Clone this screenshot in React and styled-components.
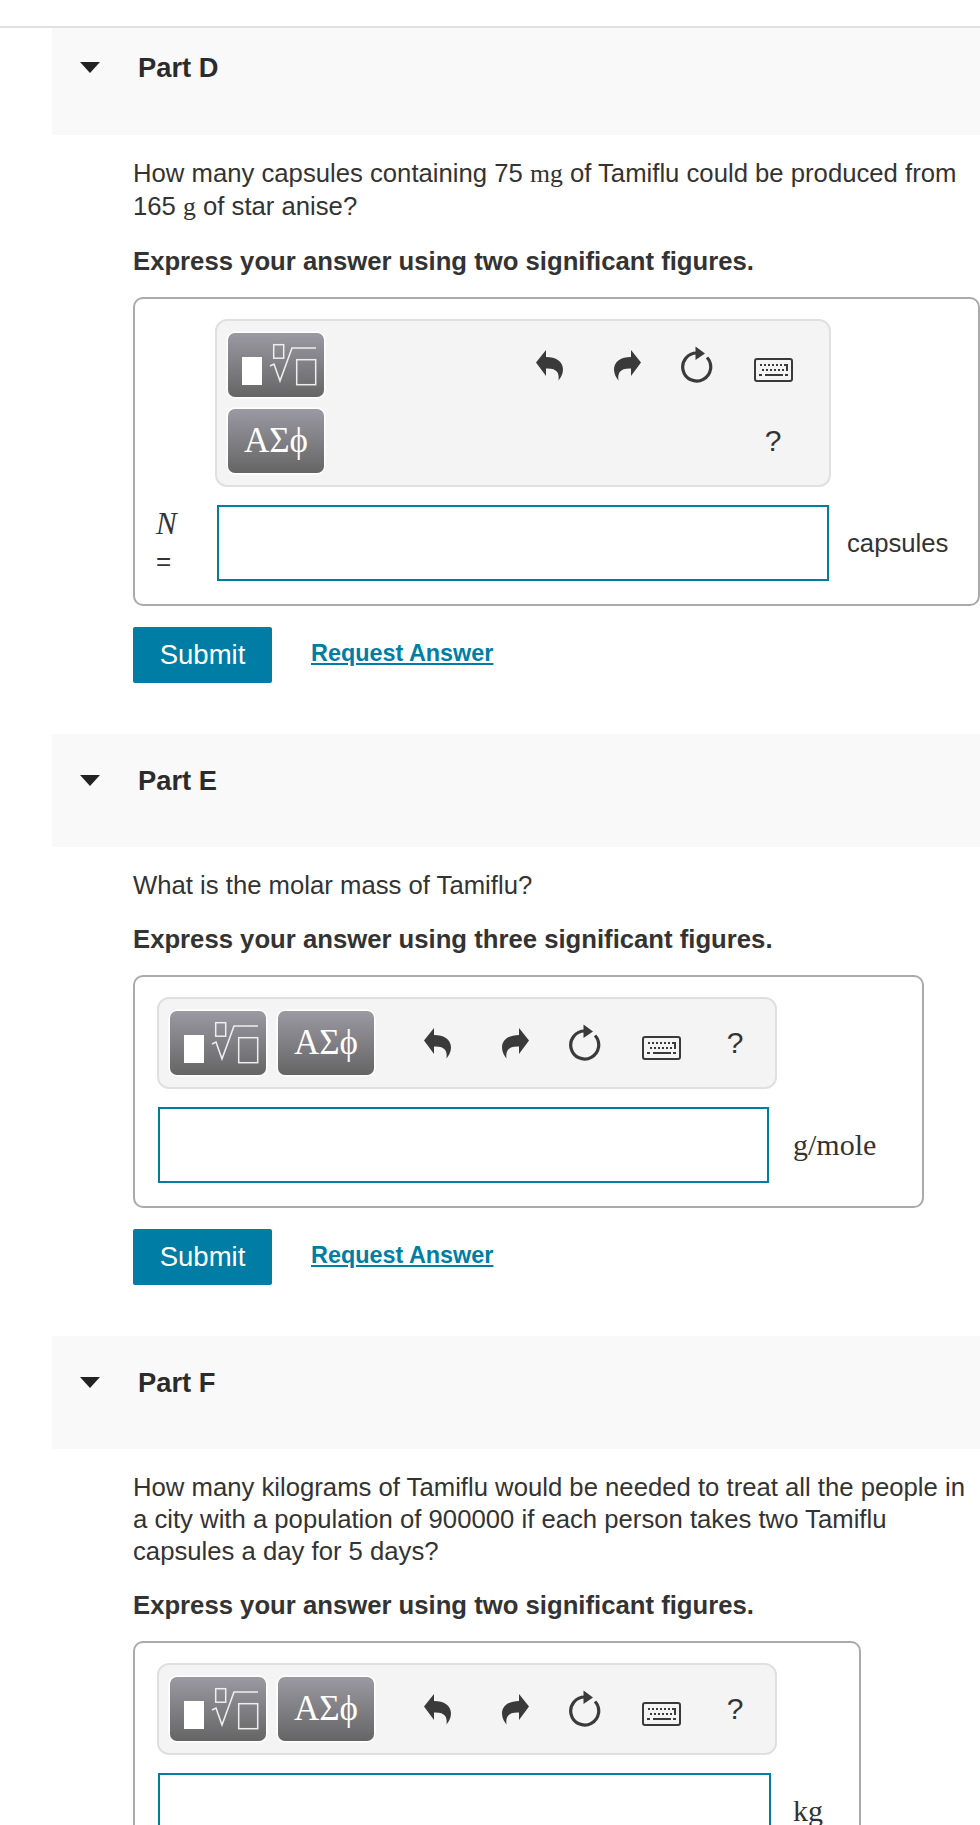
import React from "react";
import styled, { createGlobalStyle } from "styled-components";

const GlobalStyle = createGlobalStyle`
  html, body {
    margin: 0;
    padding: 0;
    background: #fff;
  }
  body {
    font-family: "Liberation Sans", Arial, sans-serif;
    color: #333;
  }
`;

const Page = styled.div`
  width: 980px;
  height: 1825px;
  overflow: hidden;
  padding-top: 26px;
  box-sizing: border-box;
`;

const Rule = styled.div`
  height: 2px;
  background: #e0e0e0;
`;

const Part = styled.section`
  margin-left: 52px;
  margin-bottom: 51px;
`;

const PartHeader = styled.div`
  display: flex;
  align-items: center;
  gap: 38px;
  box-sizing: border-box;
  height: ${(p) => (p.$first ? "107px" : "113px")};
  padding: ${(p) => (p.$first ? "24px" : "31px")} 0 0 28px;
  align-items: flex-start;
  background: #f9f9f9;
`;

const Caret = styled.span`
  width: 0;
  height: 0;
  margin-top: 10px;
  border-left: 10px solid transparent;
  border-right: 10px solid transparent;
  border-top: 11px solid #222;
`;

const PartTitle = styled.h2`
  margin: 0;
  font-size: 27.3px;
  line-height: 32px;
  font-weight: 700;
  color: #2b2b2b;
`;

const PartBody = styled.div`
  padding: 22px 0 0 81px;
`;

const Question = styled.p`
  margin: 0 0 22px;
  font-size: 25.7px;
  line-height: 32px;
  color: #333;
`;

const Instruction = styled.p`
  margin: 0 0 20px;
  font-size: 25.7px;
  line-height: 32px;
  font-weight: 700;
  color: #333;
`;

const Serif = styled.span`
  font-family: "Liberation Serif", "Times New Roman", serif;
`;

const AnswerBox = styled.div`
  display: grid;
  grid-template-columns: ${(p) => p.$left}px ${(p) => p.$main}px 1fr;
  row-gap: 18px;
  box-sizing: border-box;
  width: ${(p) => p.$width}px;
  padding: 20px 0 23px;
  border: 2px solid #aaa;
  border-radius: 10px;
`;

const Toolbar = styled.div`
  grid-column: 2;
  display: flex;
  box-sizing: border-box;
  padding: 12px 11px;
  background: #f4f4f4;
  border: 2px solid #e0e0e0;
  border-radius: 12px;
`;

const Palette = styled.div`
  display: flex;
  flex-direction: ${(p) => (p.$stacked ? "column" : "row")};
  gap: 12px;
`;

const PaletteButton = styled.div`
  display: flex;
  align-items: center;
  justify-content: center;
  width: 96px;
  height: 64px;
  border-radius: 7px;
  background: linear-gradient(#9b99a2, #656565);
  box-shadow: 0 0 0 1.5px #fff;
  color: #fff;
  font-family: "Liberation Serif", "Times New Roman", serif;
  font-size: 35px;
`;

const Tools = styled.div`
  margin-left: auto;
  display: grid;
  grid-template-columns: 78px 78px 62px 90px ${(p) => (p.$wrapped ? "" : "58px")};
  grid-auto-rows: 64px;
  row-gap: 12px;
  align-items: center;
  justify-items: center;
  color: #333;
`;

const KeyboardCell = styled.div`
  margin-top: 10px;
  display: flex;
`;

const Help = styled.div`
  grid-column: ${(p) => (p.$wrapped ? 4 : "auto")};
  font-size: 30px;
  line-height: 34px;
  color: #333;
`;

const SymbolLabel = styled.div`
  grid-column: 1;
  display: flex;
  flex-direction: column;
  padding: 0 0 0 21px;
`;

const Variable = styled.span`
  font-family: "Liberation Serif", "Times New Roman", serif;
  font-style: italic;
  font-size: 31px;
  line-height: 38px;
`;

const Equals = styled.span`
  font-size: 26px;
  line-height: 36px;
`;

const AnswerInput = styled.div`
  grid-column: 2;
  box-sizing: border-box;
  width: ${(p) => p.$width}px;
  height: 76px;
  margin-left: ${(p) => p.$offset}px;
  border: 2px solid #007da4;
  background: #fff;
`;

const Unit = styled.div`
  display: flex;
  align-items: center;
  padding-left: 16px;
  height: 76px;
  font-size: 25.7px;
  color: #333;
`;

const SerifUnit = styled(Unit)`
  font-family: "Liberation Serif", "Times New Roman", serif;
  font-size: 30px;
`;

const Actions = styled.div`
  display: flex;
  align-items: center;
  gap: 39px;
  margin-top: 21px;
`;

const SubmitButton = styled.button`
  width: 139px;
  height: 56px;
  padding: 0;
  border: 0;
  border-radius: 2px;
  background: #007da4;
  color: #fff;
  font-family: inherit;
  font-size: 27.5px;
`;

const RequestLink = styled.a`
  margin-top: -4px;
  color: #007da4;
  font-size: 23.4px;
  font-weight: 700;
  text-decoration: underline;
`;

function TemplatesIcon() {
  return (
    <svg width="96" height="64" viewBox="0 0 96 64" fill="none">
      <rect x="14" y="24" width="20" height="28" fill="#fff" />
      <rect x="45.7" y="11.7" width="10" height="13.5" stroke="#eee" strokeWidth="1.5" />
      <path d="M42 33l4-2 6 17 12-33h24" stroke="#eee" strokeWidth="1.6" />
      <rect x="68.7" y="26.7" width="19" height="25" stroke="#eee" strokeWidth="1.5" />
    </svg>
  );
}

function ReplyIcon({ flip }) {
  return (
    <svg
      width="27"
      height="32"
      viewBox="0 0 27 32"
      fill="#3a3a3a"
      style={flip ? { transform: "scaleX(-1)" } : undefined}
    >
      <path d="M0 13.5L10 1v7c10 0 17 4.500 17 12.500 0 4.500-2.300 8.500-4.500 11 1-7.500-1.500-12.500-12.500-12v7.500z" />
    </svg>
  );
}

function ResetIcon() {
  return (
    <svg width="34" height="38" viewBox="0 0 34 38" fill="none">
      <path d="M27 11.500A14 14 0 1 1 17 7" stroke="#3a3a3a" strokeWidth="3.200" />
      <path d="M15.500 0.500l9.500 7-9.500 6.500z" fill="#3a3a3a" />
    </svg>
  );
}

function KeyboardIcon() {
  const topKeys = [6, 10, 14, 18, 22, 26, 30];
  const midKeys = [8, 12, 16, 20, 24, 28];
  return (
    <svg width="39" height="24" viewBox="0 0 39 24" fill="#3a3a3a">
      <rect x="1" y="1" width="37" height="22" rx="2" fill="#f4f4f4" stroke="#3a3a3a" strokeWidth="2" />
      {topKeys.map((x) => (
        <rect key={x} x={x} y="6" width="2" height="2" />
      ))}
      {midKeys.map((x) => (
        <rect key={x} x={x} y="11" width="2" height="2" />
      ))}
      <rect x="32" y="6" width="2" height="7" />
      <rect x="5" y="16" width="3" height="2" />
      <rect x="11" y="16" width="18" height="2" />
      <rect x="31" y="16" width="3" height="2" />
    </svg>
  );
}

function MathToolbar({ wrapped, width }) {
  return (
    <Toolbar style={{ width }}>
      <Palette $stacked={wrapped}>
        <PaletteButton>
          <TemplatesIcon />
        </PaletteButton>
        <PaletteButton>ΑΣϕ</PaletteButton>
      </Palette>
      <Tools $wrapped={wrapped}>
        <ReplyIcon />
        <ReplyIcon flip />
        <ResetIcon />
        <KeyboardCell>
          <KeyboardIcon />
        </KeyboardCell>
        <Help $wrapped={wrapped}>?</Help>
      </Tools>
    </Toolbar>
  );
}

function PartSection({ name, first, children }) {
  return (
    <Part>
      <PartHeader $first={first}>
        <Caret />
        <PartTitle>{name}</PartTitle>
      </PartHeader>
      <PartBody>{children}</PartBody>
    </Part>
  );
}

function Buttons() {
  return (
    <Actions>
      <SubmitButton>Submit</SubmitButton>
      <RequestLink href="#">Request Answer</RequestLink>
    </Actions>
  );
}

export default function App() {
  return (
    <Page>
      <GlobalStyle />
      <Rule />

      <PartSection name="Part D" first>
        <Question>
          How many capsules containing 75 <Serif>mg</Serif> of Tamiflu could be produced from 165 <Serif>g</Serif> of
          star anise?
        </Question>
        <Instruction>Express your answer using two significant figures.</Instruction>
        <AnswerBox $left={80} $main={616} $width={847}>
          <MathToolbar wrapped width={616} />
          <SymbolLabel>
            <Variable>N</Variable>
            <Equals>=</Equals>
          </SymbolLabel>
          <AnswerInput $width={612} $offset={2} />
          <Unit>capsules</Unit>
        </AnswerBox>
        <Buttons />
      </PartSection>

      <PartSection name="Part E">
        <Question>What is the molar mass of Tamiflu?</Question>
        <Instruction>Express your answer using three significant figures.</Instruction>
        <AnswerBox $left={22} $main={620} $width={791}>
          <MathToolbar width={620} />
          <AnswerInput $width={611} $offset={1} />
          <SerifUnit>g/mole</SerifUnit>
        </AnswerBox>
        <Buttons />
      </PartSection>

      <PartSection name="Part F">
        <Question>
          How many kilograms of Tamiflu would be needed to treat all the people in a city with a population of 900000
          if each person takes two Tamiflu capsules a day for 5 days?
        </Question>
        <Instruction>Express your answer using two significant figures.</Instruction>
        <AnswerBox $left={22} $main={620} $width={728}>
          <MathToolbar width={620} />
          <AnswerInput $width={613} $offset={1} />
          <SerifUnit>kg</SerifUnit>
        </AnswerBox>
      </PartSection>
    </Page>
  );
}
